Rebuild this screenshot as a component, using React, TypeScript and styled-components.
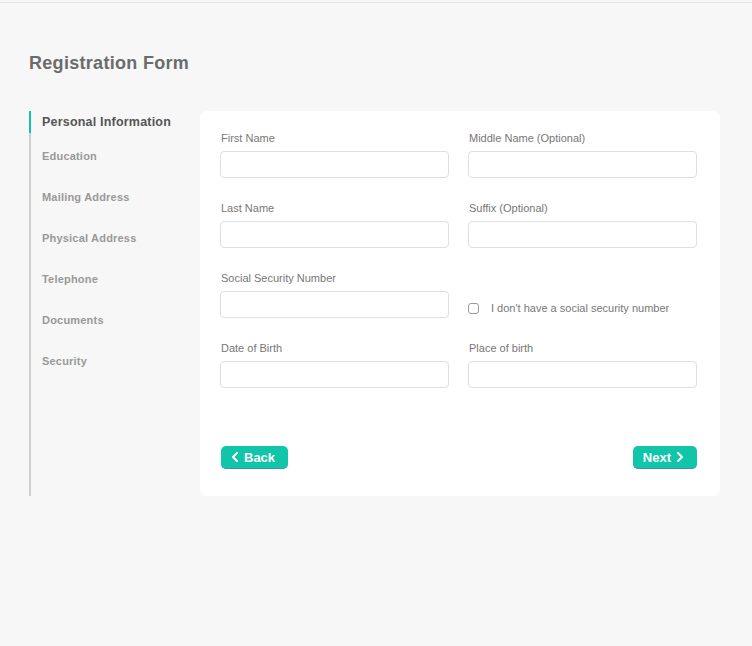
import styled, { createGlobalStyle } from "styled-components"

const Global = createGlobalStyle`
	body {
		margin: 0;
		background: #f7f7f7;
		font-family: "Helvetica Neue", "Liberation Sans", Arial, sans-serif;
	}
`

const steps = ["Education", "Mailing Address", "Physical Address", "Telephone", "Documents", "Security"]

const Chevron = ({ dir }: { dir: "left" | "right" }) => (
	<svg width="8" height="10" viewBox="0 0 8 10">
		<path d={dir === "left" ? "M6 1 L2 5 L6 9" : "M2 1 L6 5 L2 9"} stroke="white" strokeWidth="2" fill="none" strokeLinecap="round" strokeLinejoin="round" />
	</svg>
)

const Field = ({ label }: { label: string }) => (
	<FieldBox>
		<Label>{label}</Label>
		<Input />
	</FieldBox>
)

const App = () => {
	return (
		<Page>
			<Global />
			<Title>Registration Form</Title>
			<Main>
				<Sidebar>
					<Step $active>Personal Information</Step>
					{steps.map(s => <Step key={s}>{s}</Step>)}
				</Sidebar>
				<Card>
					<Grid>
						<Field label="First Name" />
						<Field label="Middle Name (Optional)" />
						<Field label="Last Name" />
						<Field label="Suffix (Optional)" />
						<Field label="Social Security Number" />
						<CheckRow>
							<Check type="checkbox" />
							<span>I don't have a social security number</span>
						</CheckRow>
						<Field label="Date of Birth" />
						<Field label="Place of birth" />
					</Grid>
					<Actions>
						<Button><Chevron dir="left" />Back</Button>
						<Button>Next<Chevron dir="right" /></Button>
					</Actions>
				</Card>
			</Main>
		</Page>
	)
}

export default App

const Page = styled.div`
	border-top: 1px solid #e4e4e4;
	margin-top: 2px;
	height: 643px;
	box-sizing: border-box;
	padding: 48px 32px 0 29px;
`

const Title = styled.h1`
	margin: 0;
	font-size: 18px;
	font-weight: 700;
	color: #6b6b6b;
	letter-spacing: 0.3px;
	line-height: 24px;
`

const Main = styled.div`
	display: flex;
	margin-top: 36px;
	gap: 28px;
`

const Sidebar = styled.div`
	width: 143px;
	border-left: 2px solid #cfcfcf;
	height: 385px;
	display: flex;
	flex-direction: column;
	gap: 26px;
`

const Step = styled.div<{ $active?: boolean }>`
	padding-left: 11px;
	white-space: nowrap;
	font-size: ${p => (p.$active ? "12.5px" : "11px")};
	font-weight: 700;
	color: ${p => (p.$active ? "#555" : "#999")};
	line-height: ${p => (p.$active ? "22px" : "15px")};
	margin-left: -2px;
	border-left: 2px solid ${p => (p.$active ? "#10c5a8" : "transparent")};
	margin-bottom: ${p => (p.$active ? "-10px" : "0")};
	letter-spacing: 0.2px;
`

const Card = styled.div`
	flex: 1;
	background: white;
	border-radius: 7px;
	height: 385px;
	box-sizing: border-box;
	padding: 20px 23px 0 20px;
`

const Grid = styled.div`
	display: grid;
	grid-template-columns: 229px 229px;
	column-gap: 19px;
	row-gap: 23px;
`

const FieldBox = styled.div`
	display: flex;
	flex-direction: column;
	gap: 6px;
`

const Label = styled.label`
	font-size: 11px;
	color: #777;
	line-height: 14px;
	padding-left: 1px;
`

const Input = styled.input`
	height: 27px;
	box-sizing: border-box;
	border: 1px solid #dcdfe3;
	border-radius: 4px;
	background: white;
`

const CheckRow = styled.label`
	display: flex;
	align-items: center;
	gap: 12px;
	padding-top: 27px;
	font-size: 11px;
	color: #777;
`

const Check = styled.input`
	margin: 0;
	width: 11px;
	height: 11px;
	appearance: none;
	border: 1px solid #999;
	border-radius: 3px;
`

const Actions = styled.div`
	display: flex;
	justify-content: space-between;
	margin-top: 58px;
	padding-left: 1px;
`

const Button = styled.button`
	display: flex;
	align-items: center;
	gap: 5px;
	height: 23px;
	padding: 0 13px 0 10px;
	background: #10c5a8;
	border: none;
	border-bottom: 1px solid #3a8fd8;
	border-radius: 5px;
	color: white;
	font-family: inherit;
	font-size: 13px;
	font-weight: 700;
	cursor: pointer;
`
